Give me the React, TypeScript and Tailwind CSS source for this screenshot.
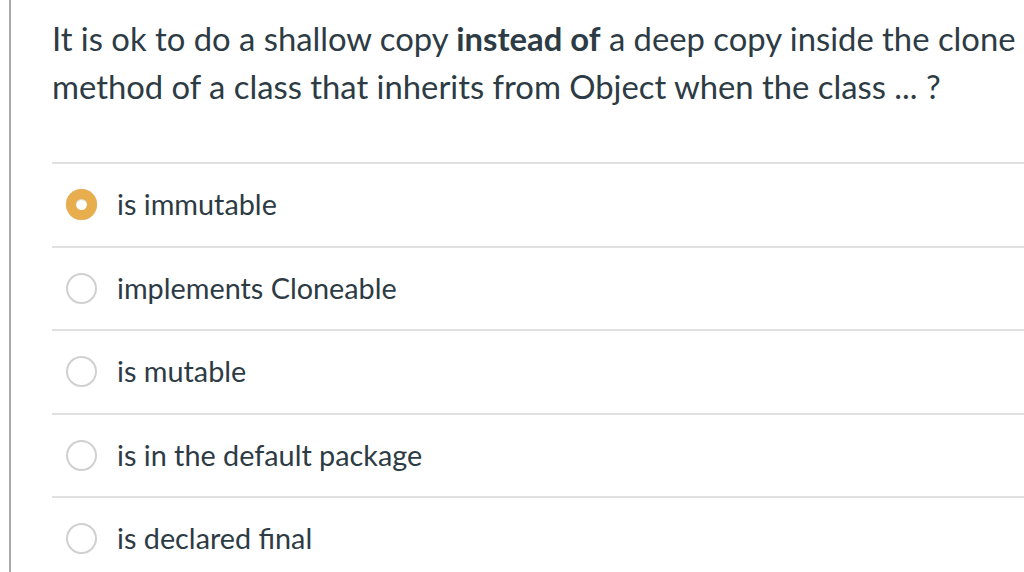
import React, { useState } from 'react';

const OPTIONS = [
    'is immutable',
    'implements Cloneable',
    'is mutable',
    'is in the default package',
    'is declared final',
];

const Radio: React.FC<{ checked: boolean }> = ({ checked }) => (
    checked ? (
        <span className="w-[31px] h-[31px] rounded-full bg-[#e8ad4d] flex items-center justify-center shrink-0 shadow-[0_0_1px_rgba(0,0,0,0.2)]">
            <span className="w-[11px] h-[11px] rounded-full bg-white shadow-[inset_0_1px_1px_rgba(0,0,0,0.15)]" />
        </span>
    ) : (
        <span className="w-[31px] h-[31px] rounded-full border-2 border-[#d0d0d0] bg-white shrink-0" />
    )
);

export default function App() {
    const [selected, setSelected] = useState(0);

    return (
        <div className="w-[1024px] h-[572px] bg-white overflow-hidden font-['Lato','Noto_Sans',sans-serif] text-[#2d3b45]">
            <div className="ml-[9px] h-full border-l-2 border-[#a9a9a9] pl-[41px]">
                <p className="text-[32.8px] leading-[48px] pt-[15px] whitespace-nowrap">
                    It is ok to do a shallow copy <b className="font-bold">instead of</b> a deep copy inside the clone
                    <br />
                    method of a class that inherits from Object when the class ... ?
                </p>
                <ul className="mt-[51px] border-t-2 border-[#e0e0e0]">
                    {OPTIONS.map((opt, i) => (
                        <li
                            key={opt}
                            onClick={() => setSelected(i)}
                            className="h-[83.5px] flex items-center border-b-2 border-[#e0e0e0] pl-[14px] gap-[20px] cursor-pointer"
                        >
                            <Radio checked={i === selected} />
                            <span className="text-[28.8px]">{opt}</span>
                        </li>
                    ))}
                </ul>
            </div>
        </div>
    );
}
